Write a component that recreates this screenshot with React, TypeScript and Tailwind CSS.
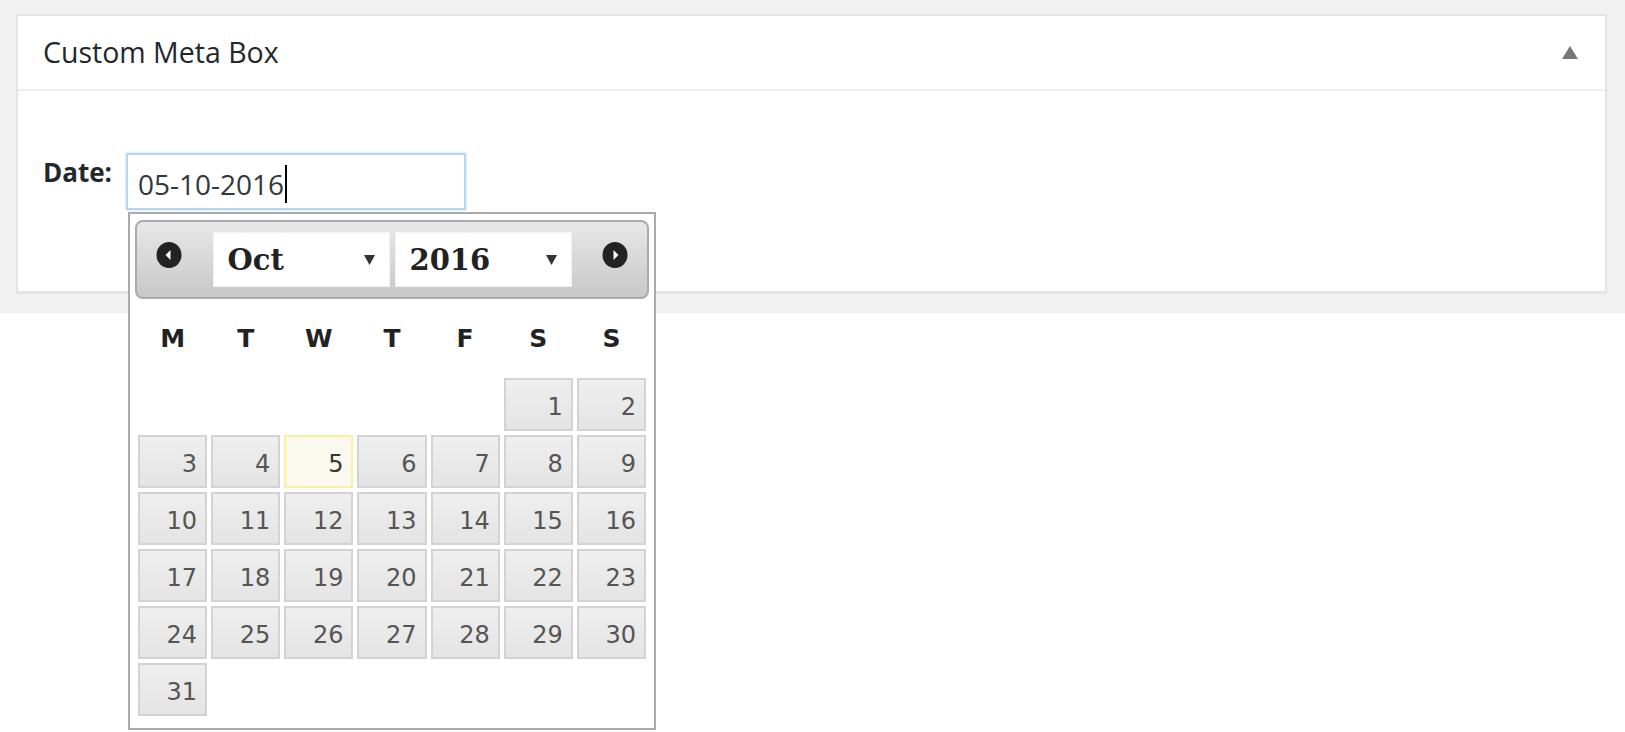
import React from "react";

const dayNames = ["M", "T", "W", "T", "F", "S", "S"];

// Oct 2016 starts on a Saturday
const cells: (number | null)[] = [null, null, null, null, null, ...Array.from({ length: 31 }, (_, i) => i + 1)];

function NavIcon({ dir }: { dir: "prev" | "next" }) {
  return (
    <svg width="26" height="26" viewBox="0 0 26 26">
      <ellipse cx="13" cy="13" rx="12.5" ry="13" fill="#222222" />
      {dir === "prev" ? (
        <polygon points="14.5,8 9.5,13 14.5,18" fill="#ffffff" />
      ) : (
        <polygon points="11.5,8 16.5,13 11.5,18" fill="#ffffff" />
      )}
    </svg>
  );
}

function SelectBox({ value }: { value: string }) {
  return (
    <div className="w-[177px] h-[55px] bg-white border border-[#f2f2f2] flex items-center justify-between pl-[14px] pr-[14px]">
      <span className="font-['DejaVu_Serif',serif] font-bold text-[29px] text-[#222222] leading-none pt-[2px]">{value}</span>
      <svg width="11" height="10" viewBox="0 0 11 10">
        <polygon points="0,0 11,0 5.5,10" fill="#333333" />
      </svg>
    </div>
  );
}

export default function App() {
  return (
    <div className="relative min-h-screen bg-white font-['Open_Sans',sans-serif]">
      {/* Admin area */}
      <div className="bg-[#f1f1f1] pt-[14px] pb-[20px] pl-[16px] pr-[18px]">
        <div className="h-[279px] bg-white border-2 border-[#e5e5e5] shadow-[0_1px_1px_rgba(0,0,0,0.04)]">
          <div className="h-[75px] border-b-2 border-[#eeeeee] flex items-center justify-between pl-[25px] pr-[27px]">
            <h2 className="text-[28.5px] text-[#23282d] leading-none">Custom Meta Box</h2>
            <svg width="16" height="13" viewBox="0 0 16 13">
              <polygon points="8,0 16,13 0,13" fill="#72777c" />
            </svg>
          </div>
          <div className="pt-[62px] pl-[25px] flex items-start">
            <label className="w-[83px] mt-[6px] text-[26px] font-bold text-[#23282d] leading-none">Date:</label>
            <div className="w-[340px] h-[57px] border-2 border-[#b4d6ee] shadow-[0_0_2px_rgba(30,140,190,0.35)] flex items-center px-[10px] text-[28px] text-[#32373c]">
              <span className="leading-none pt-[4px]">05-10-2016</span>
              <span className="w-[2px] h-[38px] bg-black ml-[1px] mt-[4px]" />
            </div>
          </div>
        </div>
      </div>

      {/* Datepicker popup */}
      <div className="absolute left-[128px] top-[212px] w-[528px] h-[518px] border-2 border-[#aaaaaa] bg-white px-[5px] pt-[6px] font-['DejaVu_Sans',sans-serif]">
        <div className="h-[79px] rounded-[8px] border-2 border-[#aaaaaa] bg-gradient-to-b from-[#e8e8e8] to-[#c8c8c8] flex items-center">
          <div className="w-[75px] pl-[19px] mb-[10px] flex">
            <NavIcon dir="prev" />
          </div>
          <div className="flex-1 flex justify-center gap-[5px]">
            <SelectBox value="Oct" />
            <SelectBox value="2016" />
          </div>
          <div className="w-[75px] pr-[19px] mb-[10px] flex justify-end">
            <NavIcon dir="next" />
          </div>
        </div>

        <div className="px-[3px]">
          <div className="h-[77px] grid grid-cols-7 gap-[4px] items-center">
            {dayNames.map((d, i) => (
              <div key={i} className="text-center text-[25px] font-bold text-[#222222] pt-[2px]">
                {d}
              </div>
            ))}
          </div>
          <div className="pt-[2px] grid grid-cols-7 gap-[4px]">
            {cells.map((n, i) =>
              n === null ? (
                <div key={i} className="h-[53px]" />
              ) : n === 5 ? (
                <div
                  key={i}
                  className="h-[53px] border-2 border-[#fcefa1] bg-[#fbf9ee] flex items-center justify-end pr-[8px] pt-[4px] text-[24px] text-[#363636]"
                >
                  {n}
                </div>
              ) : (
                <div
                  key={i}
                  className="h-[53px] border-2 border-[#d3d3d3] bg-gradient-to-b from-[#efefef] to-[#e4e4e4] flex items-center justify-end pr-[8px] pt-[4px] text-[24px] text-[#555555]"
                >
                  {n}
                </div>
              )
            )}
          </div>
        </div>
      </div>
    </div>
  );
}
